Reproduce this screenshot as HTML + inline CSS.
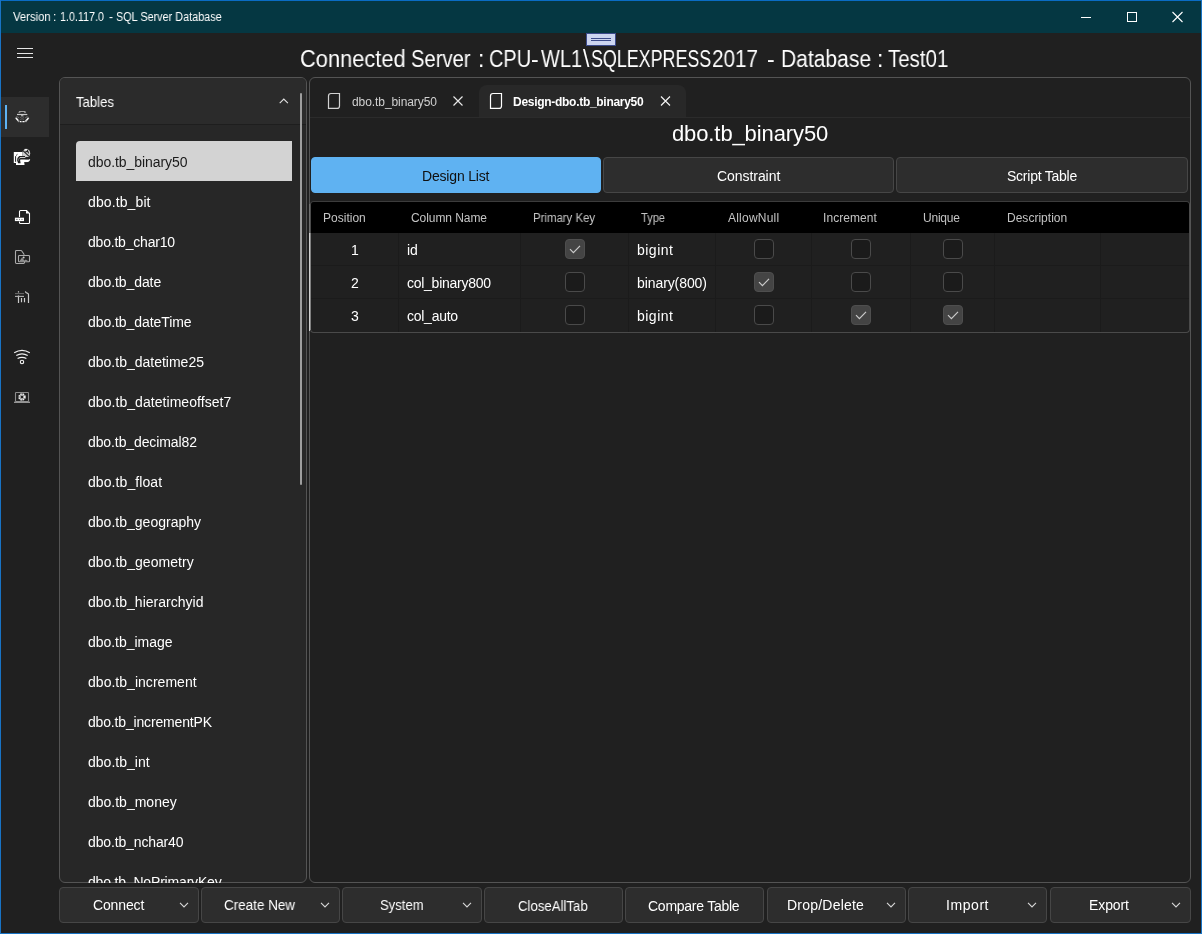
<!DOCTYPE html>
<html>
<head>
<meta charset="utf-8">
<title>SQL Server Database</title>
<style>
*{box-sizing:border-box;margin:0;padding:0}
html,body{width:1202px;height:934px;overflow:hidden;background:#202020;font-family:"Liberation Sans",sans-serif;}
#win{position:absolute;left:0;top:0;width:1202px;height:934px;background:#202020;overflow:hidden}
.wb{position:absolute;background:#1873c4;z-index:50}
.abs{position:absolute}
.t{position:absolute;white-space:pre;will-change:transform}
#titlebar{left:1px;top:1px;width:1200px;height:32px;background:#053742}
.panel{border:1px solid #545454;border-radius:6px}
#left{left:59px;top:77px;width:248px;height:806px;background:#272727;overflow:hidden}
#main{left:309px;top:77px;width:882px;height:806px;background:#202020;overflow:hidden}
.btn{position:absolute;background:#2d2d2d;border:1px solid #464646;border-radius:4px}
.cb{position:absolute;width:20px;height:20px;border:1px solid #4a4a4a;border-radius:4px;background:#1b1b1b}
.cb.on{background:#444;border-color:#4e4e4e}
.hl{position:absolute;height:1px;background:#1b1b1b}
.vl{position:absolute;width:1px;background:#1b1b1b}
svg{position:absolute;overflow:visible}
</style>
</head>
<body>
<div id="win">
<div id="titlebar" class="abs"></div>

<!-- window controls -->
<svg style="left:0;top:0" width="1202" height="34" viewBox="0 0 1202 34">
  <path d="M1081 17.5H1091" stroke="#fff" stroke-width="1" fill="none"/>
  <rect x="1127.5" y="12.5" width="9" height="9" stroke="#fff" stroke-width="1" fill="none"/>
  <path d="M1172.5 12L1182.5 22M1182.5 12L1172.5 22" stroke="#fff" stroke-width="1.1" fill="none"/>
</svg>

<!-- hot reload pill -->
<div class="abs" style="left:586px;top:33px;width:30px;height:13px;background:#ccd5f0;border:1px solid #3b4a8a"></div>
<div class="abs" style="left:591px;top:38px;width:20px;height:1px;background:#3b4a8a"></div>
<div class="abs" style="left:591px;top:40px;width:20px;height:1px;background:#3b4a8a"></div>

<!-- hamburger -->
<div class="abs" style="left:17px;top:48px;width:16px;height:1px;background:#e6e6e6"></div>
<div class="abs" style="left:17px;top:53px;width:16px;height:1px;background:#e6e6e6"></div>
<div class="abs" style="left:17px;top:57px;width:16px;height:1px;background:#e6e6e6"></div>

<!-- nav selected -->
<div class="abs" style="left:1px;top:97px;width:48px;height:40px;background:#2d2d2d"></div>
<div class="abs" style="left:5px;top:105px;width:2px;height:24px;background:#5fb2f2"></div>

<svg style="left:0;top:0" width="60" height="420" viewBox="0 0 60 420" fill="none">
<!-- 1 spy -->
<path d="M18.2 112.8L19.2 110.9H25.2L26.2 112.8H24.2L23.8 111.9H20.6L20.2 112.8Z" fill="#a0a0a0"/>
<path d="M17 114.5H27.3" stroke="#c8c8c8" stroke-width="1.2"/>
<path d="M21 115.6H23.4" stroke="#b0b0b0" stroke-width="1"/>
<path d="M15.3 118.2C15.6 116.3 18.6 116.3 19 118.2M25.3 118.2C25.7 116.3 28.7 116.3 29 118.2M20.4 117.6C21 116.4 23.4 116.4 24 117.6" stroke="#6e6e6e" stroke-width="1"/>
<path d="M15.9 117.9L19 121.4" stroke="#fff" stroke-width="1.5"/>
<path d="M28.5 117.9L25.4 121.4" stroke="#fff" stroke-width="1.5"/>
<path d="M18.4 120V122.2M26 120V122.2" stroke="#9a9a9a" stroke-width="1"/>
<path d="M19.8 121.6H21.4M23 121.6H24.6" stroke="#fff" stroke-width="1.3"/>
<path d="M21.4 121.6H23" stroke="#aaa" stroke-width="1.1"/>
<path d="M20.4 119.6C21.2 118.6 23.2 118.6 24 119.6" stroke="#666" stroke-width="1"/>
<!-- 2 remote -->
<path d="M13.8 152H22.5V155.8H25.3V159.2H30.2C30 161.5 28 162.3 24.5 162.3V165H16V163H13.8Z" fill="#fff"/>
<circle cx="26.3" cy="153.2" r="3.9" fill="#cdcdcd"/>
<path d="M22.4 150.2L28.8 156.2M24.4 152.6L27.8 151M27.2 149.8L28.6 153.4" stroke="#202020" stroke-width="1.1"/>
<path d="M24.6 149.4H27.4" stroke="#fff" stroke-width="1"/>
<path d="M15.6 156.2V161.8M16.2 155.4L17.4 154.4" stroke="#202020" stroke-width="1"/>
<path d="M25 156.6H19.6C18.2 157.6 17.6 159 17.8 160.4L18.6 162.6H19.8L19.4 160.2C19.4 159.2 20 158.8 20.6 158.8H29" stroke="#202020" stroke-width="1.4"/>
<path d="M24.2 162.8H27.4" stroke="#202020" stroke-width="1"/>
<!-- 3 doc label -->
<path d="M19.5 217V211.6Q19.5 210.5 20.6 210.5H26.6L29.5 213.4V222.4Q29.5 223.5 28.4 223.5H20.6Q19.5 223.5 19.5 222.4V221.6" stroke="#fff" stroke-width="1.1"/>
<path d="M26 210.6V213.6H29.4Z" fill="#fff"/>
<rect x="14.9" y="217.7" width="9.1" height="3.4" fill="#fff"/>
<path d="M16.4 219.4H17.4M19.3 219.4H20M21.6 219.4H22.4" stroke="#333" stroke-width="1"/>
<!-- 4 doc image -->
<path d="M24.5 261.6V262.6Q24.5 263.5 23.6 263.5H16.4Q15.5 263.5 15.5 262.6V251.4Q15.5 250.5 16.4 250.5H20.8Q21.6 250.5 22 251.2L24.3 254.8" stroke="#ababab" stroke-width="1.1"/>
<rect x="18.5" y="255.5" width="11" height="6.2" rx="0.8" stroke="#ababab" stroke-width="1.1"/>
<path d="M19.6 261L22 257.6L24.4 260.4L25.8 259.4L28 261Z" fill="#8f8f8f"/>
<circle cx="23.6" cy="257.6" r="1" fill="#cfcfcf"/>
<!-- 5 trash doc -->
<path d="M18.5 291.2V292.6M18.5 295.6V303" stroke="#c9c9c9" stroke-width="1.2"/>
<path d="M15 293.6H24" stroke="#6a6a6a" stroke-width="1"/>
<path d="M15 296.4H24" stroke="#b5b5b5" stroke-width="1.1"/>
<path d="M21.5 298V302.2M24.5 298V302.2" stroke="#cdcdcd" stroke-width="1.2"/>
<path d="M25.4 291.4Q25.6 293 27.2 293.2Q28.5 293.4 28.5 294.6V303" stroke="#c9c9c9" stroke-width="1.2"/>
<!-- 6 wifi -->
<path d="M14.2 352.8Q22 347.8 29.8 352.8" stroke="#f0f0f0" stroke-width="1.2"/>
<path d="M16.3 355.6Q22 352.2 27.7 355.6" stroke="#f0f0f0" stroke-width="1.2"/>
<path d="M17.6 358.5Q22 356.2 26.4 358.5" stroke="#f0f0f0" stroke-width="1.2"/>
<circle cx="22" cy="362" r="1.7" stroke="#f4f4f4" stroke-width="1.1"/>
<!-- 7 laptop gear -->
<rect x="15.5" y="392.5" width="13" height="9" rx="0.6" stroke="#8c8c8c" stroke-width="1.1"/>
<path d="M14 402.3H30" stroke="#9c9c9c" stroke-width="1.3"/>
<circle cx="22" cy="397" r="2.9" stroke="#f0f0f0" stroke-width="1.7" stroke-dasharray="1.6 0.7"/>
<circle cx="22" cy="397" r="1.9" stroke="#e4e4e4" stroke-width="0.8"/>
</svg>

<!-- left panel -->
<div id="left" class="abs panel">
  <div class="abs" style="left:0;top:0;width:248px;height:46px;background:#2b2b2b"></div>
  <div class="abs" style="left:0;top:46px;width:248px;height:1px;background:#1e1e1e"></div>
  <div class="abs" style="left:16px;top:63px;width:216px;height:40px;background:#d3d3d3;border-radius:4px 0 0 0"></div>
  <div class="abs" style="left:240px;top:15px;width:2px;height:392px;background:#9e9e9e;border-radius:1px"></div>
</div>
<svg style="left:279px;top:98px" width="10" height="6" viewBox="0 0 10 6"><path d="M0.7 5.2L4.8 1L8.9 5.2" stroke="#e0e0e0" stroke-width="1.1" fill="none"/></svg>

<!-- main panel -->
<div id="main" class="abs panel">
  <div class="abs" style="left:0;top:39px;width:882px;height:1px;background:#2b2b2b"></div>
  <div class="abs" style="left:169px;top:7px;width:207px;height:32px;background:#282828;border-radius:8px 8px 0 0"></div>
</div>

<!-- tab icons + close -->
<svg style="left:0;top:0" width="1202" height="130" viewBox="0 0 1202 130">
  <path d="M331 93.5H339.5V105.9a2.5 2.5 0 0 1-2.5 2.5H328.5V96a2.5 2.5 0 0 1 2.5-2.5Z" stroke="#d2d2d2" stroke-width="1.2" fill="none"/>
  <path d="M493 93.5H501.5V105.9a2.5 2.5 0 0 1-2.5 2.5H490.5V96a2.5 2.5 0 0 1 2.5-2.5Z" stroke="#ffffff" stroke-width="1.2" fill="none"/>
  <path d="M453.5 96.5L462.5 105.5M462.5 96.5L453.5 105.5" stroke="#e8e8e8" stroke-width="1.15" fill="none"/>
  <path d="M661 96.5L670 105.5M670 96.5L661 105.5" stroke="#f4f4f4" stroke-width="1.15" fill="none"/>
</svg>

<!-- 3 buttons -->
<div class="btn" style="left:311px;top:157px;width:290px;height:36px;background:#5fb2f2;border-color:#5fb2f2"></div>
<div class="btn" style="left:603px;top:157px;width:291px;height:36px"></div>
<div class="btn" style="left:896px;top:157px;width:292px;height:36px"></div>

<!-- grid -->
<div class="abs" style="left:310px;top:201px;width:880px;height:132px;border:1px solid #4a4a4a;border-top-color:#3c3c3c;border-radius:4px;background:#202020;overflow:hidden">
  <div class="abs" style="left:0;top:0;width:880px;height:31px;background:#000"></div>
  <div class="hl" style="left:0;top:63px;width:880px"></div>
  <div class="hl" style="left:0;top:96px;width:880px"></div>
  <div class="vl" style="left:87px;top:31px;height:100px"></div>
  <div class="vl" style="left:209px;top:31px;height:100px"></div>
  <div class="vl" style="left:317px;top:31px;height:100px"></div>
  <div class="vl" style="left:404px;top:31px;height:100px"></div>
  <div class="vl" style="left:500px;top:31px;height:100px"></div>
  <div class="vl" style="left:599px;top:31px;height:100px"></div>
  <div class="vl" style="left:683px;top:31px;height:100px"></div>
  <div class="vl" style="left:789px;top:31px;height:100px"></div>
</div>

<div class="abs" style="left:309px;top:233px;width:1px;height:98px;background:#cfcfcf"></div>
<div class="abs" style="left:310px;top:233px;width:1px;height:97px;background:#808080"></div>
<div class="abs" style="left:309px;top:204px;width:1px;height:29px;background:#707070"></div>
<div class="cb on" style="left:565px;top:239px"></div>
<svg style="left:565px;top:239px" width="20" height="20" viewBox="0 0 20 20"><path d="M5 10.2L8.4 13.6L15 6.8" stroke="#cacaca" stroke-width="1.2" fill="none"/></svg>
<div class="cb" style="left:754px;top:239px"></div>
<div class="cb" style="left:851px;top:239px"></div>
<div class="cb" style="left:943px;top:239px"></div>
<div class="cb" style="left:565px;top:272px"></div>
<div class="cb on" style="left:754px;top:272px"></div>
<svg style="left:754px;top:272px" width="20" height="20" viewBox="0 0 20 20"><path d="M5 10.2L8.4 13.6L15 6.8" stroke="#cacaca" stroke-width="1.2" fill="none"/></svg>
<div class="cb" style="left:851px;top:272px"></div>
<div class="cb" style="left:943px;top:272px"></div>
<div class="cb" style="left:565px;top:305px"></div>
<div class="cb" style="left:754px;top:305px"></div>
<div class="cb on" style="left:851px;top:305px"></div>
<svg style="left:851px;top:305px" width="20" height="20" viewBox="0 0 20 20"><path d="M5 10.2L8.4 13.6L15 6.8" stroke="#cacaca" stroke-width="1.2" fill="none"/></svg>
<div class="cb on" style="left:943px;top:305px"></div>
<svg style="left:943px;top:305px" width="20" height="20" viewBox="0 0 20 20"><path d="M5 10.2L8.4 13.6L15 6.8" stroke="#cacaca" stroke-width="1.2" fill="none"/></svg>


<!-- bottom buttons -->
<div class="btn" style="left:59px;top:887px;width:140px;height:36px"></div>
<svg style="left:179px;top:902px" width="10" height="6" viewBox="0 0 10 6"><path d="M1 0.9L5 4.9L9 0.9" stroke="#d8d8d8" stroke-width="1.1" fill="none"/></svg>
<div class="btn" style="left:201px;top:887px;width:139px;height:36px"></div>
<svg style="left:320px;top:902px" width="10" height="6" viewBox="0 0 10 6"><path d="M1 0.9L5 4.9L9 0.9" stroke="#d8d8d8" stroke-width="1.1" fill="none"/></svg>
<div class="btn" style="left:342px;top:887px;width:140px;height:36px"></div>
<svg style="left:462px;top:902px" width="10" height="6" viewBox="0 0 10 6"><path d="M1 0.9L5 4.9L9 0.9" stroke="#d8d8d8" stroke-width="1.1" fill="none"/></svg>
<div class="btn" style="left:484px;top:887px;width:139px;height:36px"></div>
<div class="btn" style="left:625px;top:887px;width:139px;height:36px"></div>
<div class="btn" style="left:767px;top:887px;width:139px;height:36px"></div>
<svg style="left:886px;top:902px" width="10" height="6" viewBox="0 0 10 6"><path d="M1 0.9L5 4.9L9 0.9" stroke="#d8d8d8" stroke-width="1.1" fill="none"/></svg>
<div class="btn" style="left:908px;top:887px;width:139px;height:36px"></div>
<svg style="left:1027px;top:902px" width="10" height="6" viewBox="0 0 10 6"><path d="M1 0.9L5 4.9L9 0.9" stroke="#d8d8d8" stroke-width="1.1" fill="none"/></svg>
<div class="btn" style="left:1050px;top:887px;width:141px;height:36px"></div>
<svg style="left:1171px;top:902px" width="10" height="6" viewBox="0 0 10 6"><path d="M1 0.9L5 4.9L9 0.9" stroke="#d8d8d8" stroke-width="1.1" fill="none"/></svg>


<div class="t" style="left:13.0px;top:8.5px;font-size:12px;line-height:17px;font-weight:400;color:#fff;letter-spacing:0px;transform:scaleX(0.9402);transform-origin:0 50%;">Version</div>
<div class="t" style="left:52.6px;top:8.5px;font-size:12px;line-height:17px;font-weight:400;color:#fff;letter-spacing:-0.6px;">:</div>
<div class="t" style="left:60.0px;top:8.5px;font-size:12px;line-height:17px;font-weight:400;color:#fff;letter-spacing:0px;transform:scaleX(0.8933);transform-origin:0 50%;">1.0.117.0</div>
<div class="t" style="left:109.2px;top:8.5px;font-size:12px;line-height:17px;font-weight:400;color:#fff;letter-spacing:-0.8px;">-</div>
<div class="t" style="left:116.2px;top:8.5px;font-size:12px;line-height:17px;font-weight:400;color:#fff;letter-spacing:0px;transform:scaleX(0.9038);transform-origin:0 50%;">SQL Server Database</div>
<div class="t" style="left:299.75px;top:42.8px;font-size:23px;line-height:32px;font-weight:400;color:#fff;letter-spacing:0px;transform:scaleX(0.9492);transform-origin:0 50%;">Connected</div>
<div class="t" style="left:411.12px;top:42.8px;font-size:23px;line-height:32px;font-weight:400;color:#fff;letter-spacing:0px;transform:scaleX(0.8795);transform-origin:0 50%;">Server</div>
<div class="t" style="left:477.5px;top:42.8px;font-size:23px;line-height:32px;font-weight:400;color:#fff;letter-spacing:-0.5px;">:</div>
<div class="t" style="left:489.13px;top:42.8px;font-size:23px;line-height:32px;font-weight:400;color:#fff;letter-spacing:0px;transform:scaleX(0.8683);transform-origin:0 50%;">CPU</div>
<div class="t" style="left:530.9px;top:42.8px;font-size:23px;line-height:32px;font-weight:400;color:#fff;letter-spacing:0.5px;">-</div>
<div class="t" style="left:540.6px;top:42.8px;font-size:23px;line-height:32px;font-weight:400;color:#fff;letter-spacing:0px;transform:scaleX(0.8688);transform-origin:0 50%;">WL1</div>
<div class="t" style="left:582.8px;top:42.8px;font-size:23px;line-height:32px;font-weight:400;color:#fff;letter-spacing:0.0px;">\</div>
<div class="t" style="left:590.82px;top:42.8px;font-size:23px;line-height:32px;font-weight:400;color:#fff;letter-spacing:0px;transform:scaleX(0.7774);transform-origin:0 50%;">SQLEXPRESS</div>
<div class="t" style="left:712.4px;top:42.8px;font-size:23px;line-height:32px;font-weight:400;color:#fff;letter-spacing:0px;transform:scaleX(0.9013);transform-origin:0 50%;">2017</div>
<div class="t" style="left:767.2px;top:42.8px;font-size:23px;line-height:32px;font-weight:400;color:#fff;letter-spacing:1.4px;">-</div>
<div class="t" style="left:781.09px;top:42.8px;font-size:23px;line-height:32px;font-weight:400;color:#fff;letter-spacing:0px;transform:scaleX(0.9145);transform-origin:0 50%;">Database</div>
<div class="t" style="left:876.5px;top:42.8px;font-size:23px;line-height:32px;font-weight:400;color:#fff;letter-spacing:-0.5px;">:</div>
<div class="t" style="left:888.0px;top:42.8px;font-size:23px;line-height:32px;font-weight:400;color:#fff;letter-spacing:0px;transform:scaleX(0.8899);transform-origin:0 50%;">Test01</div>
<div class="t" style="left:75.7px;top:92.0px;font-size:14px;line-height:20px;font-weight:400;color:#fff;letter-spacing:0px;transform:scaleX(0.9365);transform-origin:0 50%;">Tables</div>
<div class="t" style="left:88.3px;top:151.5px;font-size:14px;line-height:20px;font-weight:400;color:#1a1a1a;letter-spacing:-0.066px;">dbo.tb_binary50</div>
<div class="t" style="left:88.3px;top:191.5px;font-size:14px;line-height:20px;font-weight:400;color:#fff;letter-spacing:0.11px;">dbo.tb_bit</div>
<div class="t" style="left:88.3px;top:231.5px;font-size:14px;line-height:20px;font-weight:400;color:#fff;letter-spacing:-0.203px;">dbo.tb_char10</div>
<div class="t" style="left:88.3px;top:271.5px;font-size:14px;line-height:20px;font-weight:400;color:#fff;letter-spacing:-0.077px;">dbo.tb_date</div>
<div class="t" style="left:88.3px;top:311.5px;font-size:14px;line-height:20px;font-weight:400;color:#fff;letter-spacing:-0.069px;">dbo.tb_dateTime</div>
<div class="t" style="left:88.3px;top:351.5px;font-size:14px;line-height:20px;font-weight:400;color:#fff;letter-spacing:0.0px;">dbo.tb_datetime25</div>
<div class="t" style="left:88.3px;top:391.5px;font-size:14px;line-height:20px;font-weight:400;color:#fff;letter-spacing:0.053px;">dbo.tb_datetimeoffset7</div>
<div class="t" style="left:88.3px;top:431.5px;font-size:14px;line-height:20px;font-weight:400;color:#fff;letter-spacing:-0.102px;">dbo.tb_decimal82</div>
<div class="t" style="left:88.3px;top:471.5px;font-size:14px;line-height:20px;font-weight:400;color:#fff;letter-spacing:0.083px;">dbo.tb_float</div>
<div class="t" style="left:88.3px;top:511.5px;font-size:14px;line-height:20px;font-weight:400;color:#fff;letter-spacing:0.015px;">dbo.tb_geography</div>
<div class="t" style="left:88.3px;top:551.5px;font-size:14px;line-height:20px;font-weight:400;color:#fff;letter-spacing:0.045px;">dbo.tb_geometry</div>
<div class="t" style="left:88.3px;top:591.5px;font-size:14px;line-height:20px;font-weight:400;color:#fff;letter-spacing:0.018px;">dbo.tb_hierarchyid</div>
<div class="t" style="left:88.3px;top:631.5px;font-size:14px;line-height:20px;font-weight:400;color:#fff;letter-spacing:-0.032px;">dbo.tb_image</div>
<div class="t" style="left:88.3px;top:671.5px;font-size:14px;line-height:20px;font-weight:400;color:#fff;letter-spacing:0.027px;">dbo.tb_increment</div>
<div class="t" style="left:88.3px;top:711.5px;font-size:14px;line-height:20px;font-weight:400;color:#fff;letter-spacing:-0.166px;">dbo.tb_incrementPK</div>
<div class="t" style="left:88.3px;top:751.5px;font-size:14px;line-height:20px;font-weight:400;color:#fff;letter-spacing:0.01px;">dbo.tb_int</div>
<div class="t" style="left:88.3px;top:791.5px;font-size:14px;line-height:20px;font-weight:400;color:#fff;letter-spacing:-0.003px;">dbo.tb_money</div>
<div class="t" style="left:88.3px;top:831.5px;font-size:14px;line-height:20px;font-weight:400;color:#fff;letter-spacing:-0.14px;">dbo.tb_nchar40</div>
<div class="t" style="left:88.3px;top:871.5px;font-size:14px;line-height:20px;font-weight:400;color:#fff;letter-spacing:-0.181px;clip-path:inset(0 0 9px 0);">dbo.tb_NoPrimaryKey</div>
<div class="t" style="left:351.7px;top:93.6px;font-size:12px;line-height:17px;font-weight:400;color:#d0d0d0;letter-spacing:-0.078px;">dbo.tb_binary50</div>
<div class="t" style="left:513px;top:93.6px;font-size:12px;line-height:17px;font-weight:700;color:#fff;letter-spacing:-0.286px;">Design-dbo.tb_binary50</div>
<div class="t" style="left:671.6px;top:118.0px;font-size:22px;line-height:31px;font-weight:400;color:#fff;letter-spacing:-0.111px;">dbo.tb_binary50</div>
<div class="t" style="left:422px;top:165.5px;font-size:14px;line-height:20px;font-weight:400;color:#101010;letter-spacing:-0.177px;">Design List</div>
<div class="t" style="left:716.8px;top:165.5px;font-size:14px;line-height:20px;font-weight:400;color:#fff;letter-spacing:-0.057px;">Constraint</div>
<div class="t" style="left:1007px;top:165.5px;font-size:14px;line-height:20px;font-weight:400;color:#fff;letter-spacing:-0.242px;">Script Table</div>
<div class="t" style="left:322.8px;top:209.8px;font-size:12px;line-height:17px;font-weight:400;color:#c4c4c4;letter-spacing:0.012px;">Position</div>
<div class="t" style="left:411px;top:209.8px;font-size:12px;line-height:17px;font-weight:400;color:#c4c4c4;letter-spacing:-0.072px;">Column Name</div>
<div class="t" style="left:533.4px;top:209.8px;font-size:12px;line-height:17px;font-weight:400;color:#c4c4c4;letter-spacing:0px;transform:scaleX(0.9504);transform-origin:0 50%;">Primary Key</div>
<div class="t" style="left:641.2px;top:209.8px;font-size:12px;line-height:17px;font-weight:400;color:#c4c4c4;letter-spacing:0px;transform:scaleX(0.9225);transform-origin:0 50%;">Type</div>
<div class="t" style="left:728px;top:209.8px;font-size:12px;line-height:17px;font-weight:400;color:#c4c4c4;letter-spacing:0.227px;">AllowNull</div>
<div class="t" style="left:823.1px;top:209.8px;font-size:12px;line-height:17px;font-weight:400;color:#c4c4c4;letter-spacing:0.072px;">Increment</div>
<div class="t" style="left:923.4px;top:209.8px;font-size:12px;line-height:17px;font-weight:400;color:#c4c4c4;letter-spacing:-0.231px;">Unique</div>
<div class="t" style="left:1007.2px;top:209.8px;font-size:12px;line-height:17px;font-weight:400;color:#c4c4c4;letter-spacing:0.015px;">Description</div>
<div class="t" style="left:350.8px;top:239.5px;font-size:14px;line-height:20px;font-weight:400;color:#fff;letter-spacing:0px;">1</div>
<div class="t" style="left:407.2px;top:239.5px;font-size:14px;line-height:20px;font-weight:400;color:#fff;letter-spacing:0px;">id</div>
<div class="t" style="left:637px;top:239.5px;font-size:14px;line-height:20px;font-weight:400;color:#fff;letter-spacing:0.484px;">bigint</div>
<div class="t" style="left:350.9px;top:272.5px;font-size:14px;line-height:20px;font-weight:400;color:#fff;letter-spacing:0px;">2</div>
<div class="t" style="left:407.2px;top:272.5px;font-size:14px;line-height:20px;font-weight:400;color:#fff;letter-spacing:-0.265px;">col_binary800</div>
<div class="t" style="left:637px;top:272.5px;font-size:14px;line-height:20px;font-weight:400;color:#fff;letter-spacing:-0.085px;">binary(800)</div>
<div class="t" style="left:350.9px;top:305.5px;font-size:14px;line-height:20px;font-weight:400;color:#fff;letter-spacing:0px;">3</div>
<div class="t" style="left:407.2px;top:305.5px;font-size:14px;line-height:20px;font-weight:400;color:#fff;letter-spacing:-0.264px;">col_auto</div>
<div class="t" style="left:637px;top:305.5px;font-size:14px;line-height:20px;font-weight:400;color:#fff;letter-spacing:0.484px;">bigint</div>
<div class="t" style="left:93.4px;top:895.0px;font-size:14px;line-height:20px;font-weight:400;color:#fff;letter-spacing:-0.142px;">Connect</div>
<div class="t" style="left:223.7px;top:895.0px;font-size:14px;line-height:20px;font-weight:400;color:#fff;letter-spacing:0px;transform:scaleX(0.9611);transform-origin:0 50%;">Create New</div>
<div class="t" style="left:380.4px;top:895.0px;font-size:14px;line-height:20px;font-weight:400;color:#fff;letter-spacing:0px;transform:scaleX(0.9345);transform-origin:0 50%;">System</div>
<div class="t" style="left:518.2px;top:896.0px;font-size:14px;line-height:20px;font-weight:400;color:#fff;letter-spacing:0px;transform:scaleX(0.9428);transform-origin:0 50%;">CloseAllTab</div>
<div class="t" style="left:648.1px;top:896.0px;font-size:14px;line-height:20px;font-weight:400;color:#fff;letter-spacing:-0.254px;">Compare Table</div>
<div class="t" style="left:787.3px;top:895.0px;font-size:14px;line-height:20px;font-weight:400;color:#fff;letter-spacing:0.218px;">Drop/Delete</div>
<div class="t" style="left:946px;top:895.0px;font-size:14px;line-height:20px;font-weight:400;color:#fff;letter-spacing:0.563px;">Import</div>
<div class="t" style="left:1089.3px;top:895.0px;font-size:14px;line-height:20px;font-weight:400;color:#fff;letter-spacing:-0.094px;">Export</div>
<div class="wb" style="left:0;top:0;width:1202px;height:1px;background:#0a6cc4"></div>
<div class="wb" style="left:0;top:933px;width:1202px;height:1px"></div>
<div class="wb" style="left:0;top:0;width:1px;height:934px"></div>
<div class="wb" style="left:1201px;top:0;width:1px;height:934px"></div>
</div>
</body>
</html>
